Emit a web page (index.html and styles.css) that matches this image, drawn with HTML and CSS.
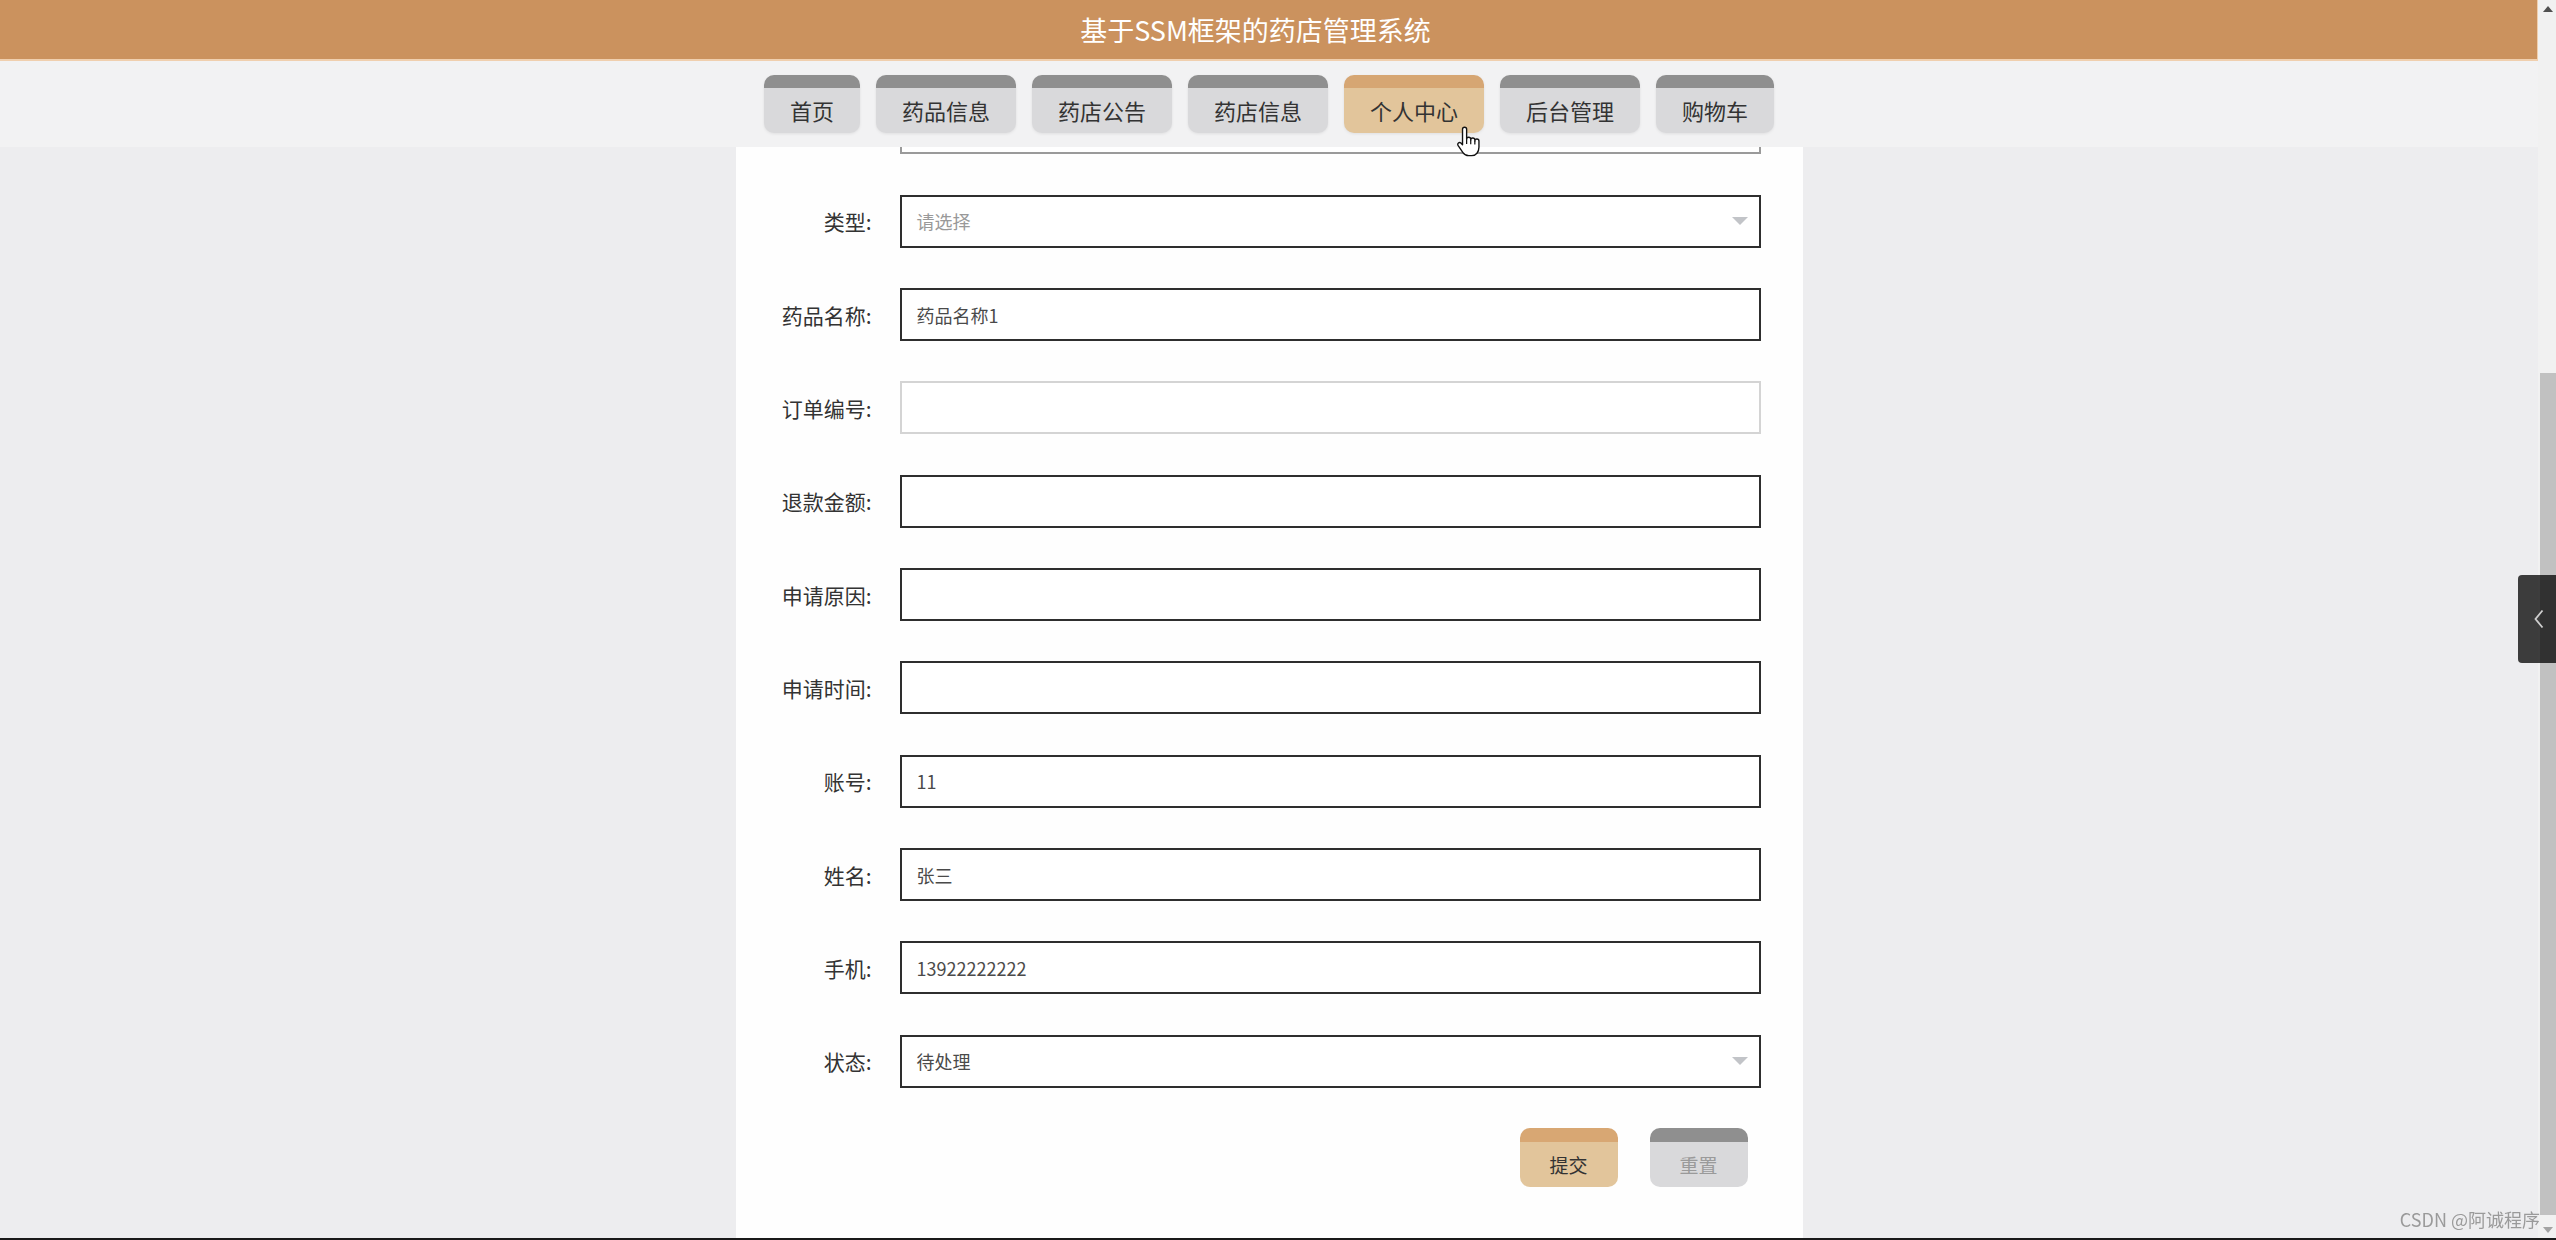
FILE: index.html
```html
<!DOCTYPE html>
<html lang="zh-CN">
<head>
  <meta charset="UTF-8" />
  <meta name="viewport" content="width=device-width, initial-scale=1.0" />
  <title>基于SSM框架的药店管理系统</title>
  <link rel="stylesheet" href="styles.css">
</head>
<body>

  <div class="page">
    <div class="top-bar">基于SSM框架的药店管理系统</div>

    <div class="nav">
      <a href="#">首页</a>
      <a href="#">药品信息</a>
      <a href="#">药店公告</a>
      <a href="#">药店信息</a>
      <a href="#" class="active">个人中心</a>
      <a href="#">后台管理</a>
      <a href="#">购物车</a>
    </div>

    <div class="main">
      <div class="panel">
        <form class="form" id="refundForm">
          <!-- row scrolled up under the nav, only its bottom edge shows -->
          <div class="row">
            <label></label>
            <input class="field muted" type="text" />
          </div>
          <div class="row">
            <label>类型:</label>
            <div class="field select">
              <span class="placeholder">请选择</span>
              <svg class="arrow" width="16" height="9" viewBox="0 0 16 9"><path d="M0 0h16L8 8z" fill="#c2c4c8"/></svg>
            </div>
          </div>
          <div class="row">
            <label>药品名称:</label>
            <input class="field" type="text" value="药品名称1" />
          </div>
          <div class="row">
            <label>订单编号:</label>
            <input class="field light" type="text" />
          </div>
          <div class="row">
            <label>退款金额:</label>
            <input class="field" type="text" />
          </div>
          <div class="row">
            <label>申请原因:</label>
            <input class="field" type="text" />
          </div>
          <div class="row">
            <label>申请时间:</label>
            <input class="field" type="text" />
          </div>
          <div class="row">
            <label>账号:</label>
            <input class="field" type="text" value="11" />
          </div>
          <div class="row">
            <label>姓名:</label>
            <input class="field" type="text" value="张三" />
          </div>
          <div class="row">
            <label>手机:</label>
            <input class="field" type="text" value="13922222222" />
          </div>
          <div class="row">
            <label>状态:</label>
            <div class="field select">
              <span>待处理</span>
              <svg class="arrow" width="16" height="9" viewBox="0 0 16 9"><path d="M0 0h16L8 8z" fill="#c2c4c8"/></svg>
            </div>
          </div>
          <div class="actions">
            <button type="submit" class="btn">提交</button>
            <button type="reset" class="btn reset">重置</button>
          </div>
        </form>
      </div>
    </div>
  </div>

  <div class="scrollbar">
    <div class="sb-btn"><svg width="10" height="6" viewBox="0 0 10 6"><path d="M0 6L5 0l5 6z" fill="#505050"/></svg></div>
    <div class="sb-track"><div class="sb-thumb"></div></div>
    <div class="sb-btn"><svg width="10" height="6" viewBox="0 0 10 6"><path d="M0 0h10L5 6z" fill="#a3a3a3"/></svg></div>
  </div>

  <div class="side-tab">
    <svg width="10" height="20" viewBox="0 0 10 20"><path d="M8.5 1.5L1.5 10l7 8.5" fill="none" stroke="#cfcfcf" stroke-width="1.8"/></svg>
  </div>

  <svg class="cursor" width="26" height="32" viewBox="0 0 19 23">
    <path d="M5.5 2.2a1.5 1.5 0 0 1 3 0V9.5a1.5 1.5 0 0 1 3 0v.6a1.5 1.5 0 0 1 3 0v.7a1.5 1.5 0 0 1 3 0v4.6c0 3.3-2.1 6.1-5.3 6.1H10c-2 0-3.2-.9-4.2-2.3L2.2 14a1.4 1.4 0 0 1 2.1-1.8l1.2 1.3z" fill="#fff" stroke="#111" stroke-width="1" stroke-linejoin="round"/>
    <path d="M8.5 9.5v3.5M11.5 10.1v3M14.5 10.8v2.6" stroke="#111" stroke-width="0.9"/>
  </svg>

  <div class="watermark">CSDN @阿诚程序</div>

</body>
</html>
```

FILE: styles.css
```css
* {
  box-sizing: border-box;
}

html, body {
  margin: 0;
  height: 100%;
}

body {
  display: flex;
  overflow: hidden;
  font-family: "Noto Sans CJK SC", "Noto Sans", sans-serif;
  background: #ededef;
  color: #333;
  border-bottom: 2px solid #1a1a1a;
}

.page {
  flex: 1;
  min-width: 0;
  display: flex;
  flex-direction: column;
}

.top-bar {
  height: 61px;
  flex-shrink: 0;
  background: #cb925e;
  border-bottom: 2px solid #f0cfae;
  border-right: 1px solid #f0cfae;
  display: flex;
  align-items: center;
  justify-content: center;
  padding-right: 26px;
  color: #fff;
  font-size: 27px;
}

.nav {
  height: 86px;
  flex-shrink: 0;
  background: #f2f2f3;
  display: flex;
  justify-content: center;
  gap: 16px;
  padding-top: 14px;
}

.nav a {
  height: 58px;
  padding: 0 26px;
  border-top: 13px solid #8f8f8f;
  border-radius: 10px;
  background: #d9d9db;
  font-size: 22px;
  line-height: 44px;
  color: #333;
  text-decoration: none;
  box-shadow: 0 1px 3px rgba(0, 0, 0, 0.08);
}

.nav a.active {
  border-top-color: #d6a673;
  background: #e2c59b;
}

.main {
  flex: 1;
  overflow: hidden;
  display: flex;
  flex-direction: column;
  justify-content: flex-end;
}

.panel {
  flex-shrink: 0;
  width: 1067px;
  margin: 0 auto;
  background: #fefefe;
  padding: 0 42px 51px 16px;
}

.form {
  display: flex;
  flex-direction: column;
  gap: 40.33px;
}

.row {
  display: flex;
  align-items: center;
  height: 53px;
}

.row label {
  flex-shrink: 0;
  width: 120px;
  margin-right: 28px;
  text-align: right;
  font-size: 21px;
  color: #333;
  white-space: nowrap;
}

.field {
  flex: 1;
  height: 53px;
  border: 2px solid #2e2e2e;
  background: #fff;
  padding: 0 15px;
  font-family: inherit;
  font-size: 18px;
  color: #4a4a4a;
  outline: none;
}

.field.light {
  border-color: #d4d4d4;
}

.field.muted {
  border-color: #9a9a9a;
}

.select {
  display: flex;
  align-items: center;
  justify-content: space-between;
  padding-right: 11px;
}

.select .placeholder {
  color: #999;
}

.actions {
  display: flex;
  justify-content: flex-end;
  gap: 32px;
  padding-right: 13px;
}

.btn {
  width: 98px;
  height: 59px;
  padding: 0;
  border: none;
  border-top: 14px solid #d8a773;
  border-radius: 10px;
  background: #e2c59b;
  font-family: inherit;
  font-size: 19px;
  line-height: 45px;
  color: #333;
  cursor: pointer;
}

.btn.reset {
  border-top-color: #8f8f8f;
  background: #d9d9db;
  color: #9a9a9a;
}

.scrollbar {
  width: 18px;
  flex-shrink: 0;
  background: #f1f1f1;
  display: flex;
  flex-direction: column;
}

.sb-btn {
  height: 17px;
  display: flex;
  align-items: center;
  justify-content: center;
  padding-left: 2px;
}

.sb-track {
  flex: 1;
  display: flex;
  padding: 356px 0 6px 2px;
}

.sb-thumb {
  flex: 1;
  background: #c1c1c1;
}

.side-tab {
  position: fixed;
  right: 0;
  top: 575px;
  width: 38px;
  height: 88px;
  border-radius: 4px 0 0 4px;
  background: rgba(0, 0, 0, 0.75);
  display: flex;
  align-items: center;
  justify-content: center;
  padding-left: 4px;
}

.cursor {
  position: fixed;
  left: 1455px;
  top: 126px;
}

.watermark {
  position: fixed;
  right: 16px;
  bottom: 8px;
  font-size: 18px;
  color: #9a9a9a;
}
```
